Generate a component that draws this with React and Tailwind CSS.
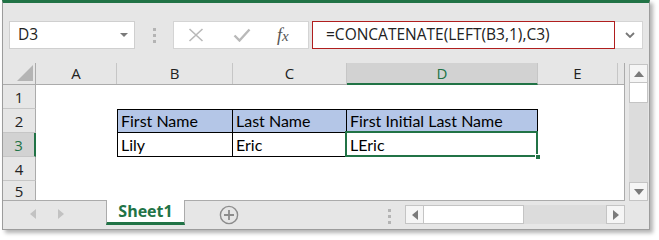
import React from "react";

const HF = { fontFamily: '"Open Sans", "Noto Sans", sans-serif' };
const CF = { fontFamily: 'Lato, "Open Sans", sans-serif' };

const cols = [
  { k: "A", w: "w-[81px]" },
  { k: "B", w: "w-[116px]" },
  { k: "C", w: "w-[114px]" },
  { k: "D", w: "w-[191px]" },
  { k: "E", w: "w-[80px]" },
];

function TriUp() {
  return (
    <svg width="10" height="6" viewBox="0 0 10 6"><polygon points="0,6 10,6 5,0" fill="#7a7a7a" /></svg>
  );
}
function TriDown() {
  return (
    <svg width="10" height="6" viewBox="0 0 10 6"><polygon points="0,0 10,0 5,6" fill="#7a7a7a" /></svg>
  );
}
function TriLeft({ c = "#7a7a7a" }) {
  return (
    <svg width="6" height="10" viewBox="0 0 6 10"><polygon points="6,0 6,10 0,5" fill={c} /></svg>
  );
}
function TriRight({ c = "#7a7a7a" }) {
  return (
    <svg width="6" height="10" viewBox="0 0 6 10"><polygon points="0,0 0,10 6,5" fill={c} /></svg>
  );
}
function Dots() {
  return (
    <div className="flex flex-col gap-[3px]">
      <div className="w-[3px] h-[3px] bg-[#b4b4b4]" />
      <div className="w-[3px] h-[3px] bg-[#b4b4b4]" />
      <div className="w-[3px] h-[3px] bg-[#b4b4b4]" />
    </div>
  );
}

function Cell({ w, children, cls = "" }) {
  return (
    <div className={`${w} h-full shrink-0 flex items-center ${cls}`}>{children}</div>
  );
}

export default function App() {
  return (
    <div className="w-[659px] h-[239px] bg-white pl-[2px]">
      <div className="w-[648px] h-[230px] bg-[#e6e6e6] border-x border-b border-[#9c9c9c] border-t-[3px] border-t-[#217346] flex flex-col shadow-[3px_3px_4px_rgba(0,0,0,0.3)]">
        {/* Formula bar */}
        <div className="h-[60px] shrink-0 flex items-start pt-[18px] pl-[6px]">
          <div className="w-[126px] h-[28px] bg-white border border-[#cfcfcf] flex items-center justify-between pl-[8px] pr-[6px]">
            <span style={HF} className="text-[15.5px] text-[#222]">D3</span>
            <svg width="8" height="5" viewBox="0 0 8 5"><polygon points="0,0 8,0 4,4" fill="#7a7a7a" /></svg>
          </div>
          <div className="w-[38px] h-[28px] flex items-center justify-center">
            <Dots />
          </div>
          <div className="w-[136px] h-[28px] bg-white border border-[#d4d4d4] flex items-center pl-[14px]">
            <svg width="16" height="14" viewBox="0 0 16 14" className="shrink-0">
              <path d="M1.5 1 L14.5 13 M14.5 1 L1.5 13" stroke="#b9b9b9" strokeWidth="1.6" fill="none" />
            </svg>
            <svg width="18" height="14" viewBox="0 0 18 14" className="ml-[29px] shrink-0">
              <path d="M1.5 7.5 L6.5 12.5 L16.5 1.5" stroke="#b9b9b9" strokeWidth="2.4" fill="none" />
            </svg>
            <span className="ml-[26px] text-[18px] italic text-[#555] leading-none" style={{ fontFamily: '"Liberation Serif", serif' }}>
              f<span className="text-[15px]">x</span>
            </span>
          </div>
          <div className="ml-[3px] w-[331px] h-[28px] bg-white border border-[#d4d4d4] flex items-stretch">
            <div className="w-[303px] -my-px -ml-px border border-[#b01e1e] flex items-center pl-[13px]">
              <span style={HF} className="text-[15.5px] text-[#222]">=CONCATENATE(LEFT(B3,1),C3)</span>
            </div>
            <div className="flex-1 flex items-center justify-center pl-[3px]">
              <svg width="10" height="6" viewBox="0 0 10 6"><path d="M1 1 L5 5 L9 1" stroke="#777" strokeWidth="1.8" fill="none" /></svg>
            </div>
          </div>
        </div>

        {/* Grid area */}
        <div className="h-[138px] shrink-0 flex">
          <div className="w-[622px] shrink-0 flex flex-col border-r border-b border-[#ababab]">
            {/* column headers */}
            <div className="h-[22px] shrink-0 flex border-b border-[#ababab]">
              <div className="w-[33px] shrink-0 border-r border-[#ababab] flex items-end justify-end pr-[2px] pb-[3px]">
                <svg width="16" height="16" viewBox="0 0 16 16"><polygon points="16,0 16,16 0,16" fill="#b4b4b4" /></svg>
              </div>
              {cols.map((c) =>
                c.k === "D" ? (
                  <div key={c.k} className={`${c.w} shrink-0 bg-[#d2d2d2] border-r border-[#c6c6c6] border-b-2 border-b-[#217346] -mb-px flex items-center justify-center`}>
                    <span style={HF} className="text-[15px] text-[#217346]">{c.k}</span>
                  </div>
                ) : (
                  <div key={c.k} className={`${c.w} shrink-0 border-r border-[#c6c6c6] flex items-center justify-center`}>
                    <span style={HF} className="text-[15px] text-[#222]">{c.k}</span>
                  </div>
                )
              )}
              <div className="flex-1" />
            </div>
            {/* rows */}
            {[1, 2, 3, 4, 5].map((r) => (
              <div key={r} className={`${r === 5 ? "h-[19px] overflow-hidden" : "h-[24px]"} shrink-0 flex`}>
                <div
                  className={`w-[33px] shrink-0 flex ${r === 5 ? "items-start pt-[1px]" : "items-center border-b border-[#c6c6c6]"} justify-center ${
                    r === 3 ? "bg-[#d2d2d2] border-r-2 border-r-[#217346]" : "border-r border-r-[#ababab]"
                  }`}
                >
                  <span style={HF} className={`text-[15px] leading-[18px] ${r === 3 ? "text-[#217346]" : "text-[#222]"}`}>{r}</span>
                </div>
                <div className="flex-1 bg-white flex h-full">
                  <Cell w="w-[81px]" />
                  {r === 2 && (
                    <>
                      <Cell w="w-[116px]" cls="bg-[#b4c6e7] border border-black pl-[3px]">
                        <span style={CF} className="text-[16px] text-black">First Name</span>
                      </Cell>
                      <Cell w="w-[114px]" cls="bg-[#b4c6e7] border-y border-r border-black pl-[3px]">
                        <span style={CF} className="text-[16px] text-black">Last Name</span>
                      </Cell>
                      <Cell w="w-[191px]" cls="bg-[#b4c6e7] border-y border-r border-black pl-[3px]">
                        <span style={CF} className="text-[16px] text-black">First Initial Last Name</span>
                      </Cell>
                    </>
                  )}
                  {r === 3 && (
                    <>
                      <Cell w="w-[116px]" cls="border-x border-b border-black pl-[3px]">
                        <span style={CF} className="text-[16px] text-black">Lily</span>
                      </Cell>
                      <Cell w="w-[114px]" cls="border-r border-b border-black pl-[3px]">
                        <span style={CF} className="text-[16px] text-black">Eric</span>
                      </Cell>
                      <Cell w="w-[191px]" cls="relative border-r border-b border-black pl-[3px]">
                        <span style={CF} className="text-[16px] text-black">LEric</span>
                        <div className="absolute -left-[2px] -top-[2px] -right-[1px] -bottom-[1px] border-2 border-[#217346]" />
                        <div className="absolute -right-[4px] -bottom-[4px] w-[6px] h-[6px] bg-[#217346] border border-white" />
                      </Cell>
                    </>
                  )}
                </div>
              </div>
            ))}
          </div>
          {/* vertical scrollbar */}
          <div className="ml-[4px] w-[19px] shrink-0 flex flex-col pt-px">
            <div className="h-[19px] bg-[#f5f5f5] border border-[#c4c4c4] flex items-center justify-center"><TriUp /></div>
            <div className="h-[20px] bg-white border border-[#c4c4c4] border-t-0" />
            <div className="flex-1 bg-[#dcdcdc]" />
            <div className="h-[19px] bg-[#f5f5f5] border border-[#c4c4c4] flex items-center justify-center"><TriDown /></div>
          </div>
        </div>

        {/* Tab bar */}
        <div className="flex-1 flex items-start">
          <div className="w-[103px] h-[26px] shrink-0 flex items-center pl-[27px]">
            <TriLeft c="#c2c2c2" />
            <div className="ml-[22px]"><TriRight c="#c2c2c2" /></div>
          </div>
          <div className="w-[79px] h-[25px] -mt-px shrink-0 bg-white border-x border-[#ababab] border-b-[3px] border-b-[#217346] flex items-center justify-center">
            <span style={HF} className="text-[16px] font-bold text-[#217346] leading-none">Sheet1</span>
          </div>
          <div className="ml-[34px] mt-[4px] w-[20px] h-[20px] shrink-0">
            <svg width="20" height="20" viewBox="0 0 20 20">
              <circle cx="10" cy="10" r="8.6" stroke="#8c8c8c" strokeWidth="1.4" fill="none" />
              <path d="M10 5 V15 M5 10 H15" stroke="#8c8c8c" strokeWidth="1.8" />
            </svg>
          </div>
          <div className="ml-[149px] mt-[8px]"><Dots /></div>
          <div className="ml-[14px] mt-[4px] h-[19px] w-[220px] shrink-0 flex">
            <div className="w-[19px] bg-[#f5f5f5] border border-[#c4c4c4] flex items-center justify-center"><TriLeft /></div>
            <div className="w-[100px] bg-white border-y border-r border-[#c4c4c4]" />
            <div className="flex-1 bg-[#dcdcdc]" />
            <div className="w-[19px] bg-[#f5f5f5] border border-[#c4c4c4] flex items-center justify-center"><TriRight /></div>
          </div>
        </div>
      </div>
    </div>
  );
}
